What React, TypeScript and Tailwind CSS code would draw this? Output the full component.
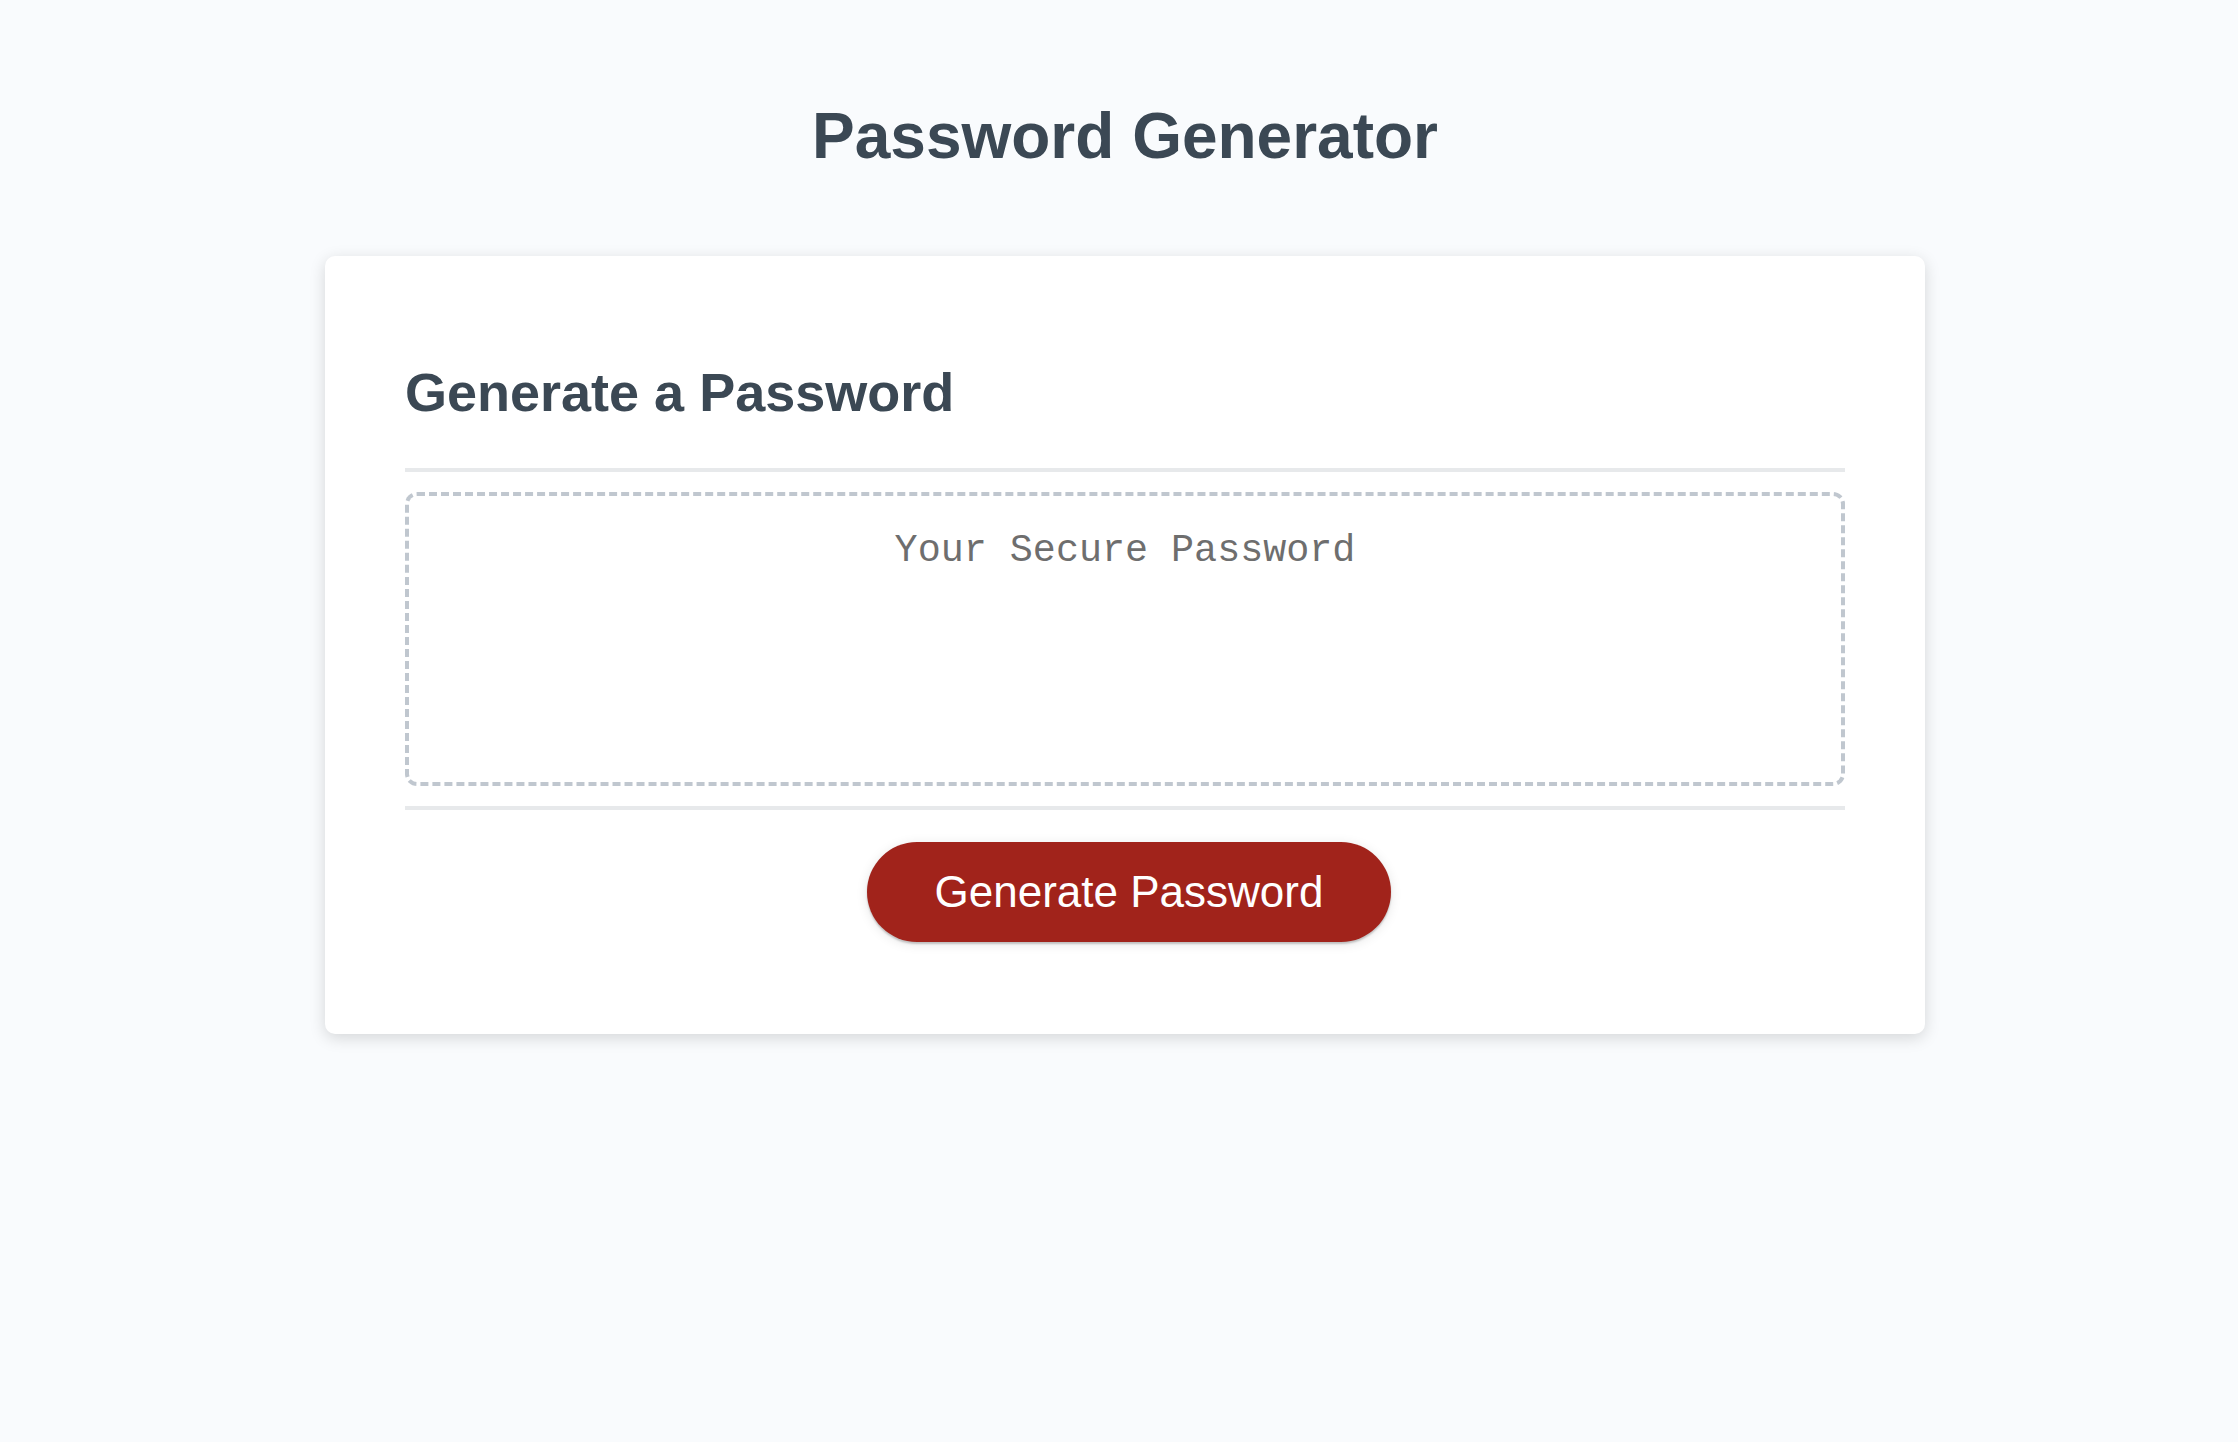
import React from "react";

export default function App() {
  return (
    <div className="min-h-[1442px] w-full bg-[#f9fbfd] font-['Liberation_Sans',Arial,sans-serif] text-[#3b4854]">
      <div className="pl-[52px] pr-[40px] pt-[56px]">
        <header className="px-[40px] pb-[40px] text-center">
          <h1 className="my-[43px] text-[64px] font-bold leading-[74px]">Password Generator</h1>
        </header>
        <div className="mx-auto max-w-[1600px] rounded-[10px] bg-white px-[80px] py-[60px] text-[36px] shadow-[0_4px_16px_0_rgba(0,0,0,0.15)]">
          <div>
            <h2 className="my-[45px] text-[54px] font-bold leading-[62px]">Generate a Password</h2>
            <div className="h-[4px] w-full bg-[#e7e9eb]" />
          </div>
          <div className="min-h-[200px]">
            <textarea
              readOnly
              rows={2}
              placeholder="Your Secure Password"
              aria-label="Generated Password"
              className="my-[20px] box-border block h-[294px] w-full resize-none overflow-hidden rounded-[12px] border-[4px] border-dashed border-[#c0c7cf] bg-white px-[30px] pb-[166px] pt-[34px] text-center font-['Liberation_Mono','Courier_New',monospace] text-[38.4px] leading-[43.5px] text-[#333] outline-none placeholder:text-[#6e6e6e]"
            />
          </div>
          <div className="text-center">
            <div className="h-[4px] w-full bg-[#e7e9eb]" />
            <button className="mb-[32px] ml-[40px] mr-[32px] mt-[32px] inline-block cursor-pointer rounded-[50px] bg-[#a1231b] px-[68px] py-[28px] text-center text-[44px] leading-[44px] text-white shadow-[0_2px_12px_0_rgba(0,0,0,0.1),0_2px_2px_0_rgba(0,0,0,0.2)]">
              Generate Password
            </button>
          </div>
        </div>
      </div>
    </div>
  );
}
